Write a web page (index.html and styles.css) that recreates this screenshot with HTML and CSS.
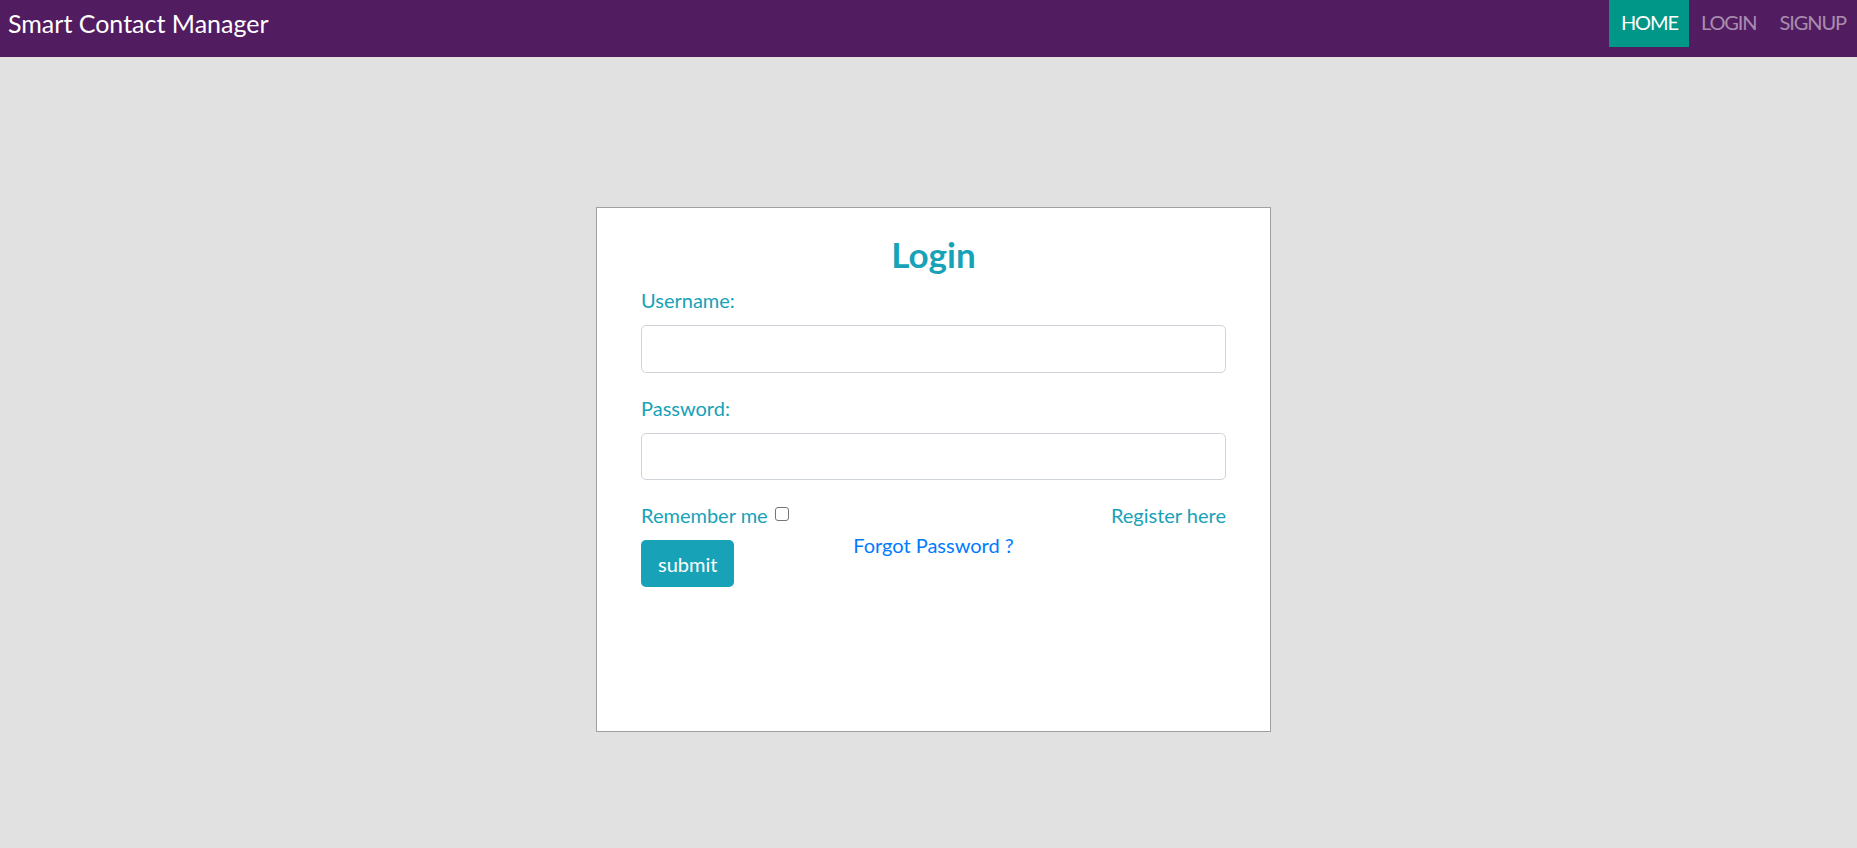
FILE: index.html
```html
<!DOCTYPE html>
<html lang="en">
<head>
<meta charset="utf-8">
<title>Smart Contact Manager</title>
<link rel="stylesheet" href="styles.css">
</head>
<body>
<nav class="navbar">
  <a class="brand" href="#">Smart Contact Manager</a>
  <ul class="nav">
    <li><a class="nav-link active" href="#">HOME</a></li>
    <li><a class="nav-link" href="#">LOGIN</a></li>
    <li><a class="nav-link" href="#">SIGNUP</a></li>
  </ul>
</nav>
<main class="main">
  <div class="card">
    <h1 class="title">Login</h1>
    <form class="form">
      <div class="form-group">
        <label class="label" for="username">Username:</label>
        <input class="input" type="text" id="username">
      </div>
      <div class="form-group">
        <label class="label" for="password">Password:</label>
        <input class="input" type="password" id="password">
      </div>
      <div class="row-remember">
        <label class="remember">Remember me <input class="check" type="checkbox"></label>
        <a class="register" href="#">Register here</a>
      </div>
      <div class="row-actions">
        <button class="btn" type="button">submit</button>
        <a class="forgot" href="#">Forgot Password ?</a>
      </div>
    </form>
  </div>
</main>
</body>
</html>
```
FILE: styles.css
```css
* { box-sizing: border-box; }
html, body { margin: 0; padding: 0; }
body {
  background: #e1e1e1;
  font-family: Lato, "Liberation Sans", sans-serif;
  font-size: 20px;
  line-height: 30px;
  color: #212529;
  min-height: 848px;
}
a { text-decoration: none; }

.navbar {
  display: flex;
  height: 57px;
  background: #521c61;
}
.brand {
  color: #fff;
  font-size: 25px;
  line-height: 30px;
  padding: 8px 0 0 8px;
}
.nav {
  display: flex;
  list-style: none;
  margin: 0 0 0 auto;
  padding: 0;
  align-items: flex-start;
}
.nav-link {
  display: block;
  padding: 7px 11px 10px 12px;
  line-height: 30px;
  font-size: 20px;
  letter-spacing: -1.1px;
  color: rgba(255, 255, 255, 0.5);
}
.nav-link.active {
  background: #009688;
  color: #fff;
}

.main {
  display: flex;
  justify-content: center;
  padding: 150px 0 0 10px;
}
.card {
  width: 675px;
  height: 525px;
  background: #fff;
  border: 1px solid #a0a0a0;
  padding: 25px 44px;
}
.title {
  margin: 0 0 10px;
  text-align: center;
  font-size: 35px;
  line-height: 42px;
  font-weight: 700;
  color: #17a2b8;
}
.form-group { margin-bottom: 20px; }
.label {
  display: block;
  margin-bottom: 10px;
  color: #17a2b8;
}
.input {
  display: block;
  width: 100%;
  height: 47.5px;
  border: 1.25px solid #ced4da;
  border-radius: 5px;
  background: #fff;
  font: inherit;
  padding: 0 15px;
}
.row-remember {
  display: flex;
  justify-content: space-between;
  align-items: baseline;
}
.remember { color: #17a2b8; }
.check {
  -webkit-appearance: none;
  appearance: none;
  width: 14px;
  height: 14px;
  margin: 0 0 2px 2px;
  border: 1.3px solid #767676;
  border-radius: 3px;
  background: #fff;
  vertical-align: baseline;
}
.register { color: #17a2b8; }
.row-actions {
  display: grid;
  grid-template-columns: 1fr auto 1fr;
  align-items: start;
}
.btn {
  justify-self: start;
  margin-top: 10px;
  height: 47px;
  padding: 0 17px;
  border: none;
  border-radius: 5px;
  background: #17a2b8;
  color: #fff;
  font: inherit;
}
.forgot { color: #007bff; }
```
